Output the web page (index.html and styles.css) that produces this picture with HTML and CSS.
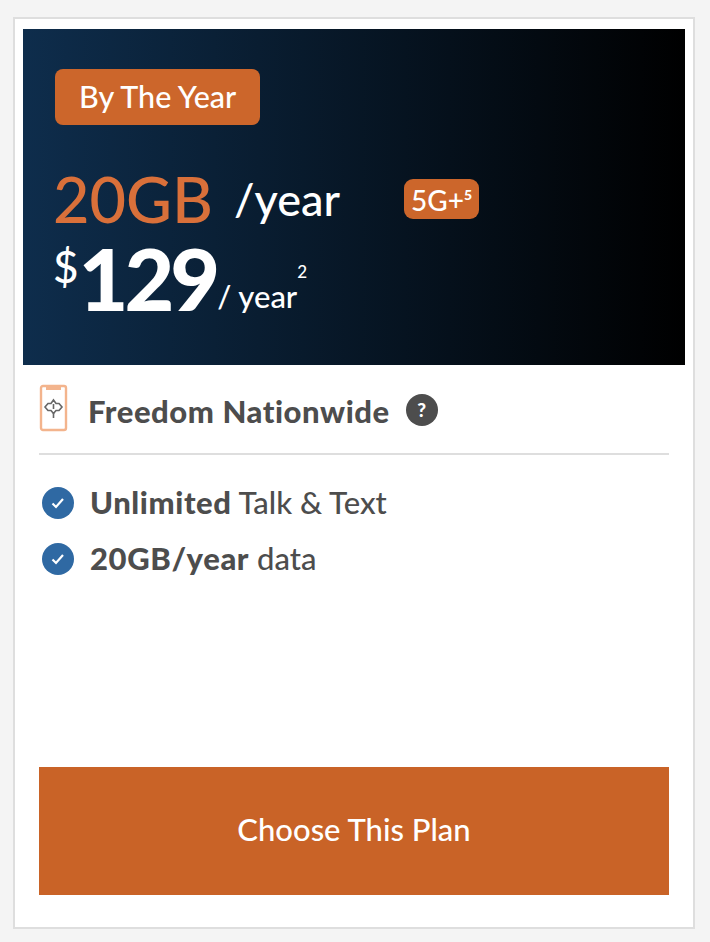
FILE: index.html
```html
<!DOCTYPE html>
<html lang="en">
  <head>
    <meta charset="UTF-8" />
    <meta name="viewport" content="width=device-width, initial-scale=1.0" />
    <title>Choose a plan</title>
    <link rel="stylesheet" href="styles.css">
  </head>
  <body>
    <div class="card">
      <div class="hero">
        <span class="tag">By The Year</span>
        <div class="data-row">
          <span class="data-size">20GB</span>
          <span class="data-unit">/year</span>
          <span class="network">5G+<sup>5</sup></span>
        </div>
        <div class="price-row">
          <span class="currency">$</span>
          <span class="amount">129</span>
          <span class="period">/ year</span>
          <sup class="note">2</sup>
        </div>
      </div>
      <div class="content">
        <div class="plan-name">
          <svg class="phone" width="29" height="48" viewBox="0 0 29 48">
            <rect x="2" y="2" width="25" height="44" rx="2" fill="#fff" stroke="#f3b48d" stroke-width="2.4" />
            <path d="M7 3h15v3H7z" fill="#f3b48d" />
            <path d="M14.500 16l2.500 3.500h3l3 3.500-3 3.500h-3l-2.500 3-2.500-3h-3l-3-3.500 3-3.500h3z" fill="#fff" stroke="#666" stroke-width="1.600" />
            <path d="M14.500 20v5M14.500 29v5" stroke="#666" stroke-width="1.600" />
          </svg>
          <span class="plan-title">Freedom Nationwide</span>
          <span class="help">?</span>
        </div>
        <ul class="features">
          <li>
            <svg width="32" height="32" viewBox="0 0 32 32">
              <circle cx="16" cy="16" r="16" fill="#2f69a3" />
              <path d="M10.500 16.500l3.500 3.500 7-8" fill="none" stroke="#fff" stroke-width="2.200" />
            </svg>
            <span class="feature-text"><b>Unlimited</b> Talk &amp; Text</span>
          </li>
          <li>
            <svg width="32" height="32" viewBox="0 0 32 32">
              <circle cx="16" cy="16" r="16" fill="#2f69a3" />
              <path d="M10.500 16.500l3.500 3.500 7-8" fill="none" stroke="#fff" stroke-width="2.200" />
            </svg>
            <span class="feature-text"><b>20GB/year</b> data</span>
          </li>
        </ul>
        <div class="choose">Choose This Plan</div>
      </div>
    </div>
  </body>
</html>
```

FILE: styles.css
```css
* {
  margin: 0;
  padding: 0;
  box-sizing: border-box;
}
body {
  padding: 17px 15px 11px 13px;
  background: #f4f4f4;
  font-family: Lato, "Open Sans", sans-serif;
}
.card {
  height: 912px;
  padding: 10px 8px;
  border: 2px solid #dedede;
  background: #fff;
}
.hero {
  height: 336px;
  padding: 40px 32px 0;
  background: linear-gradient(90deg, #0e2d4c, #000 100%);
  color: #fff;
}
.tag {
  display: inline-block;
  height: 56px;
  padding: 0 24px;
  border-radius: 8px;
  background: #cc662b;
  font-size: 30.500px;
  font-weight: 500;
  line-height: 54px;
}
.data-row {
  display: flex;
  align-items: center;
  height: 76px;
  margin-top: 36px;
  margin-left: -2px;
}
.data-size {
  width: 181px;
  color: #d9703a;
  font-size: 63px;
  font-weight: 500;
  line-height: 76px;
}
.data-unit {
  width: 170px;
  font-size: 45px;
  font-weight: 500;
  line-height: 74px;
}
.network {
  width: 75px;
  height: 40px;
  border-radius: 9px;
  background: #cc662b;
  font-size: 28px;
  font-weight: 500;
  line-height: 42px;
  text-align: center;
}
.network sup {
  font-size: 14px;
  font-weight: 900;
  line-height: 0;
  vertical-align: 11px;
}
.price-row {
  display: flex;
  align-items: flex-start;
  height: 80px;
}
.currency {
  margin-top: 4px;
  margin-left: -2px;
  font-size: 44px;
  font-weight: 500;
  line-height: 50px;
}
.amount {
  margin-top: 1px;
  font-size: 86px;
  font-weight: 900;
  line-height: 80px;
  letter-spacing: -4px;
}
.period {
  margin-top: 41px;
  margin-left: 1px;
  font-size: 31px;
  font-weight: 500;
  line-height: 36px;
}
.note {
  margin-top: 26px;
  font-size: 17px;
  font-weight: 500;
  line-height: 18px;
}
.content {
  padding: 0 16px;
}
.plan-name {
  display: flex;
  align-items: center;
  height: 90px;
  padding-top: 4px;
  border-bottom: 2px solid #dedede;
}
.phone {
  margin-bottom: 6px;
}
.plan-title {
  margin-left: 20px;
  color: #4d4d4d;
  font-size: 31px;
  font-weight: 900;
  letter-spacing: 0.550px;
}
.help {
  width: 32px;
  height: 32px;
  margin-left: 16px;
  margin-bottom: 2px;
  border-radius: 50%;
  background: #4d4d4d;
  color: #fff;
  font-size: 19px;
  font-weight: 900;
  line-height: 32px;
  text-align: center;
}
.features {
  padding-top: 20px;
  list-style: none;
}
.features li {
  display: flex;
  align-items: center;
  gap: 16px;
  height: 56px;
  padding-left: 3px;
  color: #4d4d4d;
  font-size: 31px;
  font-weight: 500;
}
.feature-text {
  margin-bottom: 2px;
}
.features b {
  font-weight: 900;
  letter-spacing: 0.600px;
}
.choose {
  height: 128px;
  margin-top: 180px;
  background: #c96327;
  color: #fff;
  font-size: 31px;
  font-weight: 500;
  line-height: 124px;
  text-align: center;
}
```
